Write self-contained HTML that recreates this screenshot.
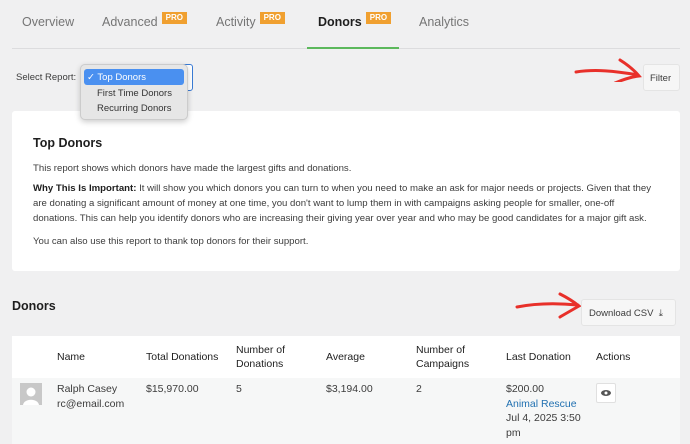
<!DOCTYPE html>
<html><head><style>
*{margin:0;padding:0;box-sizing:border-box}
body{width:690px;height:444px;overflow:hidden;background:#f0f0f1;font-family:"Liberation Sans",sans-serif;color:#1e1e1e;position:relative}
.a{position:absolute;white-space:nowrap}
.tab{font-size:12.5px;color:#757575;top:15px}
.pro{display:inline-block;vertical-align:top;margin-top:-3px;margin-left:4px;background:#f0a030;color:#fff;font-size:8px;font-weight:bold;padding:1px 4px;line-height:10px}
.p{font-size:9.6px;color:#3c3c3c;left:33px}
.h{font-size:10.5px;color:#1e1e1e;line-height:14px}
.c{font-size:10.5px;color:#3c3c3c;line-height:14.5px}
</style></head><body>
<div class="a tab" style="left:22px">Overview</div>
<div class="a tab" style="left:102px">Advanced<span class="pro">PRO</span></div>
<div class="a tab" style="left:216px">Activity<span class="pro">PRO</span></div>
<div class="a tab" style="left:318px;color:#1e1e1e;font-weight:bold">Donors<span class="pro">PRO</span></div>
<div class="a tab" style="left:419px">Analytics</div>
<div class="a" style="left:12px;top:48px;width:668px;height:1px;background:#dcdcde"></div>
<div class="a" style="left:307px;top:47px;width:92px;height:2px;background:#5cb85c"></div>

<div class="a" style="left:16px;top:72px;font-size:9.5px;color:#3c3c3c">Select Report:</div>

<svg class="a" style="left:570px;top:52px" width="72" height="30"><path d="M6 20 C25 17 45 19 68 23 M50 8 C58 13 64 18 69 24 C60 25 52 28 45 31" fill="none" stroke="#e8302a" stroke-width="3" stroke-linecap="round"/></svg>
<div class="a" style="left:643px;top:64px;width:37px;height:27px;background:#f6f6f6;border:1px solid #e4e4e4;border-radius:3px;font-size:9.5px;color:#3c3c3c;padding:8px 0 0 6px">Filter</div>

<div class="a" style="left:12px;top:111px;width:668px;height:160px;background:#fff;border-radius:3px"></div>
<div class="a" style="left:33px;top:136px;font-size:12.5px;font-weight:bold">Top Donors</div>
<div class="a p" style="top:163px">This report shows which donors have made the largest gifts and donations.</div>
<div class="a p" style="top:183px"><b style="color:#1e1e1e">Why This Is Important:</b> It will show you which donors you can turn to when you need to make an ask for major needs or projects. Given that they</div>
<div class="a p" style="top:198px">are donating a significant amount of money at one time, you don't want to lump them in with campaigns asking people for smaller, one-off</div>
<div class="a p" style="top:213px">donations. This can help you identify donors who are increasing their giving year over year and who may be good candidates for a major gift ask.</div>
<div class="a p" style="top:236px">You can also use this report to thank top donors for their support.</div>

<div class="a" style="left:86px;top:64px;width:107px;height:27px;border:1px solid #3a7bd5;border-radius:3px;background:#fff;z-index:5"></div>
<div class="a" style="left:80px;top:64px;width:108px;height:56px;background:#e6e6e6;border:1px solid #ccc;border-radius:5px;box-shadow:0 2px 6px rgba(0,0,0,.2);z-index:6"></div>
<div class="a" style="left:84px;top:69px;width:100px;height:16px;background:#4a90f0;border-radius:3px;color:#fff;font-size:9.5px;padding:3px 0 0 3px;z-index:7">✓ Top Donors</div>
<div class="a" style="left:97px;top:88px;font-size:9.5px;color:#333;z-index:7">First Time Donors</div>
<div class="a" style="left:97px;top:103px;font-size:9.5px;color:#333;z-index:7">Recurring Donors</div>

<div class="a" style="left:12px;top:299px;font-size:12.5px;font-weight:bold">Donors</div>
<svg class="a" style="left:512px;top:290px" width="70" height="30"><path d="M5 17 C25 13 45 13 66 15 M48 4 C56 8 62 12 67 16 C60 20 53 24 48 27" fill="none" stroke="#e8302a" stroke-width="3" stroke-linecap="round"/></svg>
<div class="a" style="left:581px;top:299px;width:95px;height:27px;background:#f6f6f6;border:1px solid #e4e4e4;border-radius:3px;font-size:9.5px;color:#3c3c3c;padding:8px 0 0 7px">Download CSV&nbsp;&nbsp;⤓</div>

<div class="a" style="left:12px;top:336px;width:668px;height:42px;background:#fff"></div>
<div class="a" style="left:12px;top:378px;width:668px;height:66px;background:#f6f7f7"></div>
<div class="a h" style="left:57px;top:350px">Name</div>
<div class="a h" style="left:146px;top:350px">Total Donations</div>
<div class="a h" style="left:236px;top:343px">Number of<br>Donations</div>
<div class="a h" style="left:326px;top:350px">Average</div>
<div class="a h" style="left:416px;top:343px">Number of<br>Campaigns</div>
<div class="a h" style="left:506px;top:350px">Last Donation</div>
<div class="a h" style="left:596px;top:350px">Actions</div>

<svg class="a" style="left:20px;top:383px" width="22" height="22"><rect width="22" height="22" fill="#c8c8c8"/><circle cx="11" cy="9" r="4.5" fill="#fff"/><path d="M3 22 C4 15 18 15 19 22Z" fill="#fff"/></svg>
<div class="a c" style="left:57px;top:382px">Ralph Casey<br>rc@email.com</div>
<div class="a c" style="left:146px;top:382px">$15,970.00</div>
<div class="a c" style="left:236px;top:382px">5</div>
<div class="a c" style="left:326px;top:382px">$3,194.00</div>
<div class="a c" style="left:416px;top:382px">2</div>
<div class="a c" style="left:506px;top:382px">$200.00<br><span style="color:#2271b1">Animal Rescue</span><br>Jul 4, 2025 3:50<br>pm</div>
<div class="a" style="left:596px;top:383px;width:20px;height:20px;background:#fff;border:1px solid #e0e0e0;border-radius:2px"></div>
<svg class="a" style="left:600px;top:389px" width="12" height="8"><ellipse cx="6" cy="4" rx="5" ry="3" fill="#555"/><circle cx="6" cy="4" r="1.5" fill="#fff"/></svg>
</body></html>
